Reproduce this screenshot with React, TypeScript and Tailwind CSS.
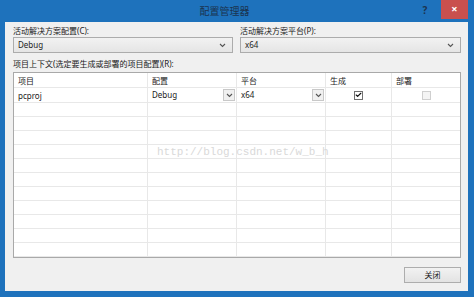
import { Check } from "lucide-react"

const font = "font-['Noto_Sans','Noto_Sans_CJK_SC',sans-serif]"

function Chevron({ className = "" }: { className?: string }) {
  return (
    <svg width="7" height="5" viewBox="0 0 7 5" className={className}>
      <path d="M1 1 L3.5 3.5 L6 1" fill="none" stroke="#555" strokeWidth="1.1" />
    </svg>
  )
}

function Select({ value }: { value: string }) {
  return (
    <div className="h-[16px] flex items-center justify-between border border-[#acacac] bg-gradient-to-b from-[#f2f2f2] to-[#e5e5e5] pl-[4px] pr-[6px] text-[#1e1e1e]">
      <span>{value}</span>
      <Chevron />
    </div>
  )
}

function CellDrop({ value }: { value: string }) {
  return (
    <div className="flex items-center justify-between pl-[4px] pr-[1px] h-full">
      <span>{value}</span>
      <div className="w-[12px] h-[12px] border border-[#c8c8c8] bg-[#f0f0f0] flex items-center justify-center">
        <Chevron />
      </div>
    </div>
  )
}

export default function App() {
  const cols = ["w-[134px]", "w-[89px]", "w-[89px]", "w-[66px]", "flex-1"]
  const emptyRows = Array.from({ length: 11 })

  return (
    <div className={`w-[474px] h-[297px] bg-[#1e72bc] flex flex-col ${font}`}>
      {/* title bar */}
      <div className="h-[22px] flex items-start">
        <div className="flex-1 pl-[40px] pt-[4px] text-center text-[10px] text-[#1b3450]">配置管理器</div>
        <div className="w-[32px] pt-[3px] text-[10px] font-bold text-[#1b3450] text-center">?</div>
        <div className="w-[27px] h-[19px] bg-[#c9504e] mr-[6px] flex items-center justify-center text-white text-[11px] font-bold">
          ×
        </div>
      </div>

      {/* body */}
      <div className="flex-1 ml-[5px] mr-[6px] mb-[6px] bg-[#f0f0f0] pl-[8px] pr-[7px] pt-[2px] flex flex-col text-[8px] text-[#1a1a1a]">
        <div className="flex gap-[7px]">
          <div className="w-[220px] flex flex-col">
            <div className="h-[13px] leading-[13px]">活动解决方案配置(C):</div>
            <Select value="Debug" />
          </div>
          <div className="flex-1 flex flex-col">
            <div className="h-[13px] leading-[13px]">活动解决方案平台(P):</div>
            <Select value="x64" />
          </div>
        </div>

        <div className="mt-[4px] h-[14px] leading-[14px]">项目上下文(选定要生成或部署的项目配置)(R):</div>

        {/* grid */}
        <div className="relative mt-[1px] h-[186px] border border-[#a9a9a9] bg-white overflow-hidden">
          <div className="flex h-[15px] border-b border-[#e8e8e8]">
            {["项目", "配置", "平台", "生成", "部署"].map((h, i) => (
              <div key={h} className={`${cols[i]} pl-[4px] leading-[15px] ${i < 4 ? "border-r border-[#e8e8e8]" : ""}`}>
                {h}
              </div>
            ))}
          </div>
          <div className="flex h-[15px] border-b border-[#e8e8e8] items-center">
            <div className={`${cols[0]} pl-[4px] h-full leading-[15px] border-r border-[#e8e8e8]`}>pcproj</div>
            <div className={`${cols[1]} h-full border-r border-[#e8e8e8] flex items-center`}>
              <div className="w-full h-[13px]"><CellDrop value="Debug" /></div>
            </div>
            <div className={`${cols[2]} h-full border-r border-[#e8e8e8] flex items-center`}>
              <div className="w-full h-[13px]"><CellDrop value="x64" /></div>
            </div>
            <div className={`${cols[3]} h-full border-r border-[#e8e8e8] flex items-center justify-center`}>
              <div className="w-[9px] h-[9px] border border-[#707070] bg-white flex items-center justify-center">
                <Check size={8} strokeWidth={4} color="#111" />
              </div>
            </div>
            <div className={`${cols[4]} h-full flex items-center justify-center`}>
              <div className="w-[9px] h-[9px] border border-[#cfcfcf] bg-[#f4f4f4]" />
            </div>
          </div>
          {emptyRows.map((_, r) => (
            <div key={r} className="flex h-[14px] border-b border-[#e8e8e8]">
              {cols.map((c, i) => (
                <div key={i} className={`${c} h-full ${i < 4 ? "border-r border-[#e8e8e8]" : ""}`} />
              ))}
            </div>
          ))}
          <div className="absolute left-[143px] top-[71px] font-['Liberation_Mono',monospace] text-[11px] text-[#d9d9d9]">
            http://blog.csdn.net/w_b_h
          </div>
        </div>

        <div className="flex justify-end mt-[9px]">
          <div className="w-[57px] h-[16px] border border-[#adadad] bg-gradient-to-b from-[#f2f2f2] to-[#e3e3e3] flex items-center justify-center">
            关闭
          </div>
        </div>
      </div>
    </div>
  )
}
